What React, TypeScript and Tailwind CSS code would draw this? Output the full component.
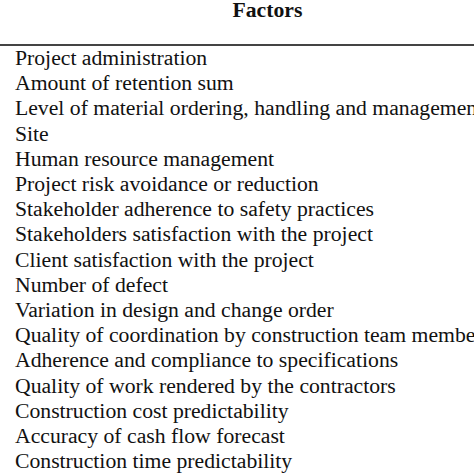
import React from "react";

const rows = [
  "Project administration",
  "Amount of retention sum",
  "Level of material ordering, handling and management",
  "Site",
  "Human resource management",
  "Project risk avoidance or reduction",
  "Stakeholder adherence to safety practices",
  "Stakeholders satisfaction with the project",
  "Client satisfaction with the project",
  "Number of defect",
  "Variation in design and change order",
  "Quality of coordination by construction team members",
  "Adherence and compliance to specifications",
  "Quality of work rendered by the contractors",
  "Construction cost predictability",
  "Accuracy of cash flow forecast",
  "Construction time predictability",
];

export default function App() {
  return (
    <div
      className="w-[474px] h-[474px] overflow-hidden bg-white text-[#111]"
      style={{ fontFamily: '"Liberation Serif", "Times New Roman", serif' }}
    >
      <div className="w-[493px] origin-top-left scale-x-[1.085]">
        <div className="h-[44px] text-center text-[20px] leading-[20px] font-bold">Factors</div>
        <div className="h-[2px] bg-[#444]" />
        <div className="pl-[13.8px] text-[20px] leading-[25.2px] whitespace-nowrap">
          {rows.map((r) => (
            <div key={r}>{r}</div>
          ))}
        </div>
      </div>
    </div>
  );
}
